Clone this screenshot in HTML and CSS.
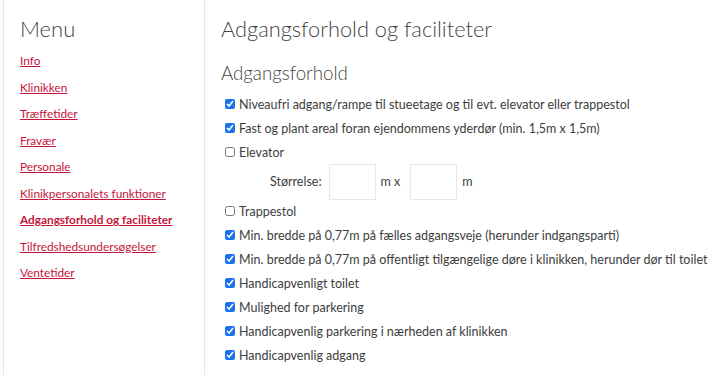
FILE: index.html
```html
<!DOCTYPE html>
<html lang="da">
<head>
<meta charset="utf-8">
<title>Adgangsforhold og faciliteter</title>
<link rel="stylesheet" href="styles.css">
</head>
<body>
<div class="page">
  <aside class="sidebar">
    <h2 class="menu-title">Menu</h2>
    <nav class="menu">
      <a href="#">Info</a>
      <a href="#">Klinikken</a>
      <a href="#">Træffetider</a>
      <a href="#">Fravær</a>
      <a href="#">Personale</a>
      <a href="#">Klinikpersonalets funktioner</a>
      <a href="#" class="active">Adgangsforhold og faciliteter</a>
      <a href="#">Tilfredshedsundersøgelser</a>
      <a href="#">Ventetider</a>
    </nav>
  </aside>
  <main class="content">
    <h1 class="title">Adgangsforhold og faciliteter</h1>
    <h2 class="subtitle">Adgangsforhold</h2>
    <ul class="checks">
      <li><input type="checkbox" checked><span>Niveaufri adgang/rampe til stueetage og til evt. elevator eller trappestol</span></li>
      <li><input type="checkbox" checked><span>Fast og plant areal foran ejendommens yderdør (min. 1,5m x 1,5m)</span></li>
      <li><input type="checkbox"><span>Elevator</span></li>
      <li class="size-row"><span class="size-label">Størrelse:</span><input type="text" class="size-input"><span class="unit">m x</span><input type="text" class="size-input"><span>m</span></li>
      <li><input type="checkbox"><span>Trappestol</span></li>
      <li><input type="checkbox" checked><span>Min. bredde på 0,77m på fælles adgangsveje (herunder indgangsparti)</span></li>
      <li><input type="checkbox" checked><span>Min. bredde på 0,77m på offentligt tilgængelige døre i klinikken, herunder dør til toilet</span></li>
      <li><input type="checkbox" checked><span>Handicapvenligt toilet</span></li>
      <li><input type="checkbox" checked><span>Mulighed for parkering</span></li>
      <li><input type="checkbox" checked><span>Handicapvenlig parkering i nærheden af klinikken</span></li>
      <li><input type="checkbox" checked><span>Handicapvenlig adgang</span></li>
    </ul>
  </main>
</div>
</body>
</html>
```
FILE: styles.css
```css
html, body {
  margin: 0;
  padding: 0;
  background: #fff;
}
body {
  font-family: "Lato", "Open Sans", sans-serif;
  color: #3d3d3d;
  width: 710px;
  height: 375px;
  overflow: hidden;
}
.page {
  display: flex;
  align-items: stretch;
  height: 375px;
}
.sidebar {
  width: 202px;
  margin-left: 3px;
  border-left: 1px solid #e6e6e6;
  border-right: 1px solid #e6e6e6;
  padding: 15px 0 0 16px;
  box-sizing: border-box;
  flex: none;
}
.menu-title {
  margin: 0 0 10px 0;
  font-size: 22px;
  font-weight: 300;
  color: #444;
  line-height: 28px;
}
.menu {
  display: flex;
  flex-direction: column;
  gap: 10px;
}
.menu a {
  font-size: 11.8px;
  line-height: 16.5px;
  color: #c4163b;
  text-decoration: underline;
  align-self: flex-start;
}
.menu a.active {
  font-weight: bold;
}
.content {
  flex: 1;
  padding: 15px 0 0 16px;
}
.title {
  margin: 0;
  font-size: 21.8px;
  font-weight: 300;
  line-height: 28px;
  color: #444;
}
.subtitle {
  margin: 18px 0 7px 0;
  font-size: 18.7px;
  font-weight: 300;
  line-height: 24px;
  color: #444;
}
.checks {
  list-style: none;
  margin: 0;
  padding: 0 0 0 4px;
}
.checks li {
  display: flex;
  align-items: center;
  height: 24px;
  font-size: 12.5px;
  white-space: nowrap;
}
.checks input[type="checkbox"] {
  width: 10px;
  height: 10px;
  margin: 0 4px 0 0;
  accent-color: #1a73e8;
}
.checks li.size-row {
  height: 35px;
  padding-left: 45px;
}
.size-label {
  margin-right: 7px;
}
.size-input {
  width: 47px;
  height: 36px;
  box-sizing: border-box;
  border: 1px solid #e8e8e8;
  margin: 0 5px 0 0;
  padding: 0;
}
.unit {
  margin-right: 10px;
}
```
